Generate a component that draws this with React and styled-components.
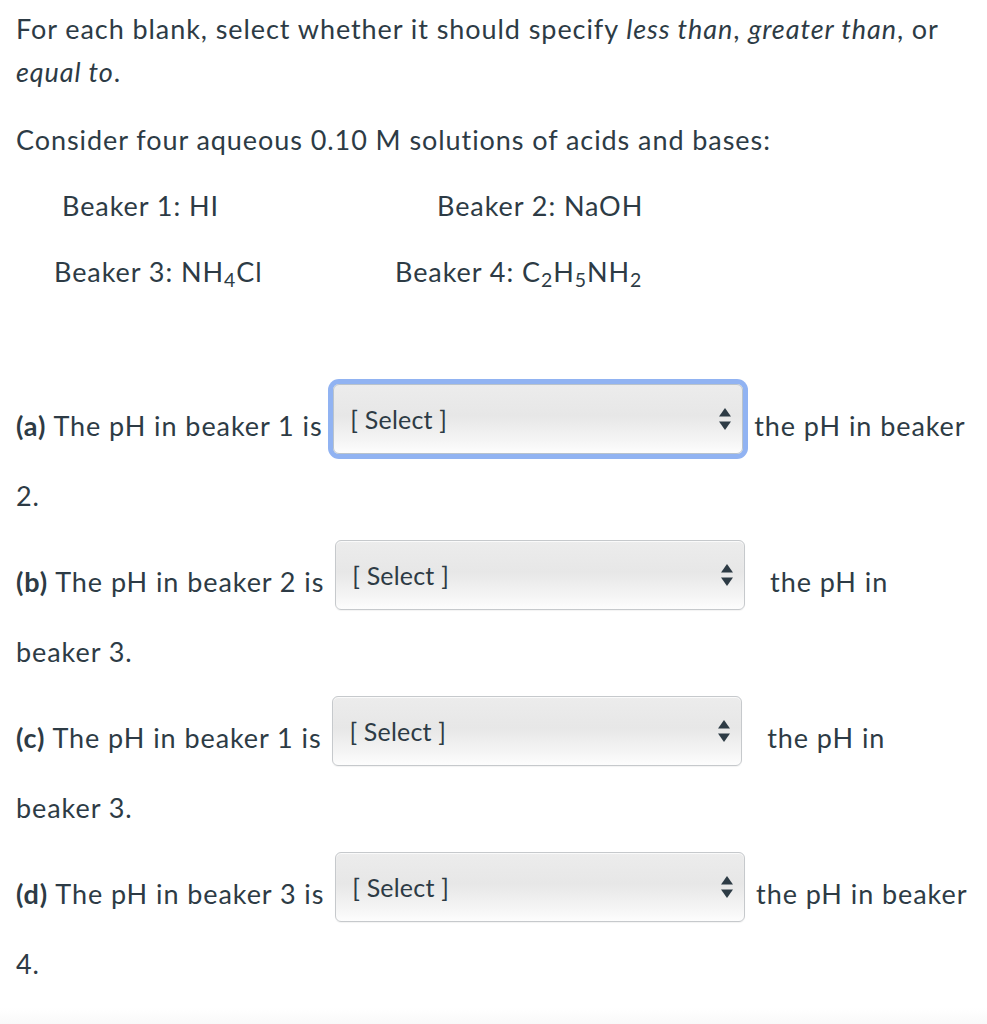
import React from 'react'
import styled, { createGlobalStyle, css } from 'styled-components'

const GlobalStyle = createGlobalStyle`
html, body {
  margin: 0;
  padding: 0;
  background: #fff;
}
body {
  font-family: Lato, "Open Sans", sans-serif;
  color: #2d3b45;
}
`

const Page = styled.div`
min-height: 100vh;
display: flex;
flex-direction: column;
box-sizing: border-box;
padding-top: 7px;
`

const Content = styled.div`
padding: 0 16px;
font-size: 27px;
letter-spacing: 0.93px;
line-height: 43px;
`

const Para = styled.p`
margin: 0 0 ${p => p.gap ?? 23}px;
em {
  font-style: italic;
}
`

const BeakerGrid = styled.div`
display: grid;
grid-template-columns: 379px 1fr;
row-gap: 23px;
margin: 23px 0 91px;
`

const Cell = styled.div`
padding-left: ${p => p.indent}px;
white-space: nowrap;
sub {
  font-size: 0.72em;
  vertical-align: -0.28em;
  line-height: 0;
}
`

const Label = styled.b`
font-weight: 700;
`

const SelectBox = styled.span`
display: inline-flex;
align-items: center;
justify-content: space-between;
box-sizing: border-box;
width: 410px;
height: 70px;
margin: 0 ${p => p.trail || 3}px 20px 3px;
padding: 0 11px 0 16px;
vertical-align: 7px;
border: 1px solid #c6c9cc;
border-radius: 6px;
background: linear-gradient(to bottom, #ececec 0%, #e7e7e7 45%, #f4f4f4 80%, #fdfdfd 100%);
box-shadow: inset 0 1px 1px rgba(255,255,255,0.8), 0 1px 1px rgba(0,0,0,0.05);
font-size: 25px;
letter-spacing: 0.2px;
line-height: 30px;
color: #2d3b45;
${p => p.focused && css`
  box-shadow: 0 0 0 5px #91b3f2;
  border-color: #b9c3cc;
`}
`

const SelectText = styled.span`
display: block;
`

const Footer = styled.div`
margin-top: auto;
height: 36px;
background: linear-gradient(to bottom, #ffffff, #f1f1f1);
`

function Arrows() {
  return (
    <svg width="12" height="22" viewBox="0 0 12 22">
      <polygon points="6,0 12,8.5 0,8.5" fill="#2d3b45" />
      <polygon points="0,13.5 12,13.5 6,22" fill="#2d3b45" />
    </svg>
  )
}

function Select({ focused, trail }) {
  return (
    <SelectBox focused={focused} trail={trail}>
      <SelectText>[ Select ]</SelectText>
      <Arrows />
    </SelectBox>
  )
}

const questions = [
  { label: '(a)', lead: 'The pH in beaker 1 is', tail: 'the pH in beaker 2.', focused: true },
  { label: '(b)', lead: 'The pH in beaker 2 is', tail: 'the pH in beaker 3.', trail: 17 },
  { label: '(c)', lead: 'The pH in beaker 1 is', tail: 'the pH in beaker 3.', trail: 17 },
  { label: '(d)', lead: 'The pH in beaker 3 is', tail: 'the pH in beaker 4.' },
]

export default function App() {
  return (
    <>
      <GlobalStyle />
      <Page>
        <Content>
          <Para gap={25}>
            For each blank, select whether it should specify <em>less than</em>, <em>greater than</em>, or <em>equal to</em>.
          </Para>
          <Para gap={0}>Consider four aqueous 0.10 M solutions of acids and bases:</Para>
          <BeakerGrid>
            <Cell indent={46}>Beaker 1: HI</Cell>
            <Cell indent={42}>Beaker 2: NaOH</Cell>
            <Cell indent={38}>Beaker 3: NH<sub>4</sub>Cl</Cell>
            <Cell indent={0}>Beaker 4: C<sub>2</sub>H<sub>5</sub>NH<sub>2</sub></Cell>
          </BeakerGrid>
          {questions.map(q => (
            <Para key={q.label}>
              <Label>{q.label}</Label> {q.lead} <Select focused={q.focused} trail={q.trail} /> {q.tail}
            </Para>
          ))}
        </Content>
        <Footer />
      </Page>
    </>
  )
}
